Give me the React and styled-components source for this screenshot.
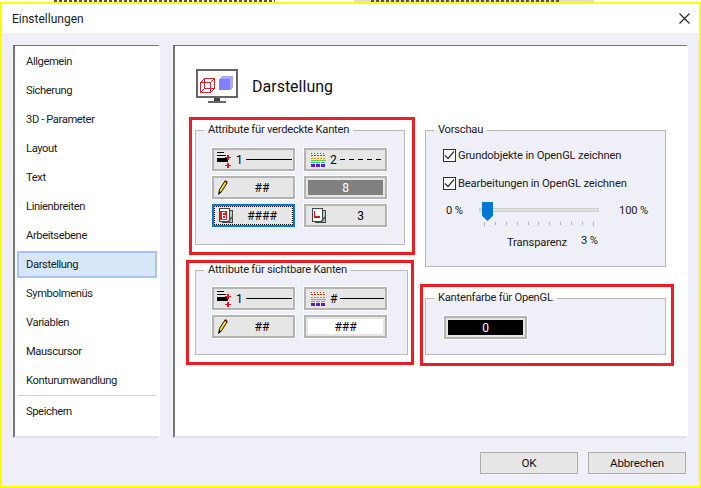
import React from 'react'
import styled, { createGlobalStyle } from 'styled-components'

const GlobalStyle = createGlobalStyle`
  html, body {
    margin: 0;
    padding: 0;
    background: #fff;
  }
  * {
    box-sizing: border-box;
  }
`

const Page = styled.div`
  position: relative;
  width: 701px;
  height: 488px;
  overflow: hidden;
  display: flex;
  flex-direction: column;
  padding: 4px 2px 2px 2px;
  background: #ffff00;
  font-family: Roboto, 'Noto Sans', sans-serif;
  font-size: 11.2px;
  letter-spacing: -0.15px;
  color: #1c1c1c;
`

// clipped window behind the dialog, only its last pixels show
const TopStrip = styled.div`
  position: absolute;
  top: 0;
  left: 0;
  right: 0;
  height: 2px;
  background: linear-gradient(90deg, #fff 354px, #dcdcdc 354px, #dcdcdc 594px, #fff 594px);
  &::before,
  &::after {
    content: '';
    position: absolute;
    top: 0;
    height: 2px;
    background: repeating-linear-gradient(90deg, #555 0 3px, transparent 3px 5px);
  }
  &::before {
    left: 54px;
    width: 221px;
  }
  &::after {
    left: 371px;
    width: 189px;
  }
`

const TitleBar = styled.div`
  height: 29px;
  flex: none;
  background: #fff;
  display: flex;
  align-items: center;
  justify-content: space-between;
  padding: 0 9px 0 10px;
  font-size: 12px;
  letter-spacing: 0;
`

const Body = styled.div`
  flex: 1;
  background: #eeeff7;
  display: flex;
  flex-direction: column;
  padding: 12px 11px 0 11px;
`

const Panes = styled.div`
  display: flex;
  gap: 13px;
  height: 393px;
`

const Sunken = styled.div`
  background: #fff;
  border-style: solid;
  border-width: 1px 2px 2px 2px;
  border-color: #777 #fff #e3e3e3 #777;
`

const NavList = styled(Sunken)`
  flex: none;
  width: 147px;
  padding: 1px 1px 0 2px;
  display: flex;
  flex-direction: column;
  letter-spacing: -0.4px;
`

const NavItem = styled.div`
  height: 29px;
  flex: none;
  display: flex;
  align-items: center;
  padding-left: 9px;
  ${(p) =>
    p.$active &&
    `
    height: 27px;
    margin: 1px 0;
    background: #d6e6f7;
    border: 2px solid #a9c4ea;
    padding-left: 7px;
  `}
`

const NavDivider = styled.div`
  height: 1px;
  flex: none;
  margin: 0 1px 1px;
  background: #d0d0d0;
`

const MainPane = styled(Sunken)`
  flex: 1;
  min-width: 0;
  padding: 19px 13px 0 11px;
`

const Header = styled.div`
  display: flex;
  align-items: center;
  gap: 14px;
  height: 42px;
  margin-left: 10px;
  font-size: 16px;
  letter-spacing: 0;
  color: #111;
`

const Columns = styled.div`
  display: flex;
  margin-top: 10px;
`

const Col = styled.div`
  display: flex;
  flex-direction: column;
`

const RedFrame = styled.div`
  flex: none;
  border: 3px solid #ee1c25;
  padding: ${(p) => p.$pad};
  margin: ${(p) => p.$margin || 0};
  width: ${(p) => p.$w}px;
  height: ${(p) => p.$h}px;
`

const Group = styled.div`
  flex: none;
  margin: ${(p) => p.$margin || 0};
  border: 1px solid #b9b9b9;
  background: #eeeff7;
  width: ${(p) => p.$w}px;
  height: ${(p) => p.$h}px;
  position: relative;
`

const GroupTitle = styled.div`
  position: absolute;
  top: -8px;
  left: 8px;
  padding: 0 4px;
  line-height: 14px;
  letter-spacing: -0.25px;
  background: linear-gradient(#fff 50%, #eeeff7 50%);
`

const ButtonGrid = styled.div`
  display: grid;
  grid-template-columns: 83px 83px;
  grid-auto-rows: 23px;
  column-gap: 9px;
  row-gap: 5px;
  padding: ${(p) => p.$top}px 0 0 ${(p) => p.$left || 16}px;
`

const AttrButton = styled.div`
  display: flex;
  align-items: center;
  background: #e6e6e6;
  border: 2px solid #b4b4b4;
  outline: 1px solid #fff;
  font-size: 12px;
  letter-spacing: 0;
  color: #000;
  position: relative;
  ${(p) =>
    p.$focused &&
    `
    border-color: #0078d7;
    outline: none;
    &::after {
      content: '';
      position: absolute;
      inset: 0;
      border: 1px dotted #000;
    }
  `}
`

const IconSlot = styled.span`
  display: flex;
  width: 22px;
  flex: none;
  padding-left: ${(p) => p.$pl}px;
`

const Hash = styled.span`
  flex: 1;
  text-align: center;
  padding: 0 ${(p) => p.$pr || 0}px 0 ${(p) => p.$pl || 0}px;
`

const StylePreview = styled.span`
  display: flex;
  align-items: center;
  flex: 1;
  gap: 3px;
  padding-left: ${(p) => p.$pl || 0}px;
  padding-right: 1px;
`

const StyleLine = styled.span`
  flex: 1;
  height: 1px;
  background: ${(p) =>
    p.$dashed
      ? 'repeating-linear-gradient(90deg, #000 0 5px, transparent 5px 9px)'
      : '#000'};
`

const Swatch = styled.span`
  flex: 1;
  margin: 2px;
  height: 15px;
  display: flex;
  align-items: center;
  justify-content: center;
  background: ${(p) => p.$bg};
  color: ${(p) => p.$fg};
`

const CheckList = styled.div`
  display: flex;
  flex-direction: column;
  gap: 14px;
  padding: 17px 0 12px 17px;
`

const CheckRow = styled.label`
  display: flex;
  align-items: center;
  gap: 2px;
  height: 14px;
`

const CheckBox = styled.span`
  width: 13px;
  height: 13px;
  border: 1px solid #333;
  background: #fff;
  display: flex;
  align-items: center;
  justify-content: center;
`

const SliderRow = styled.div`
  display: grid;
  grid-template-columns: 33px 120px auto;
  align-items: center;
  height: 16px;
  padding-left: 20px;
`

const SliderTrack = styled.div`
  position: relative;
  height: 4px;
  background: #e0e0e0;
  border: 1px solid #d0d0d0;
`

const Thumb = styled.span`
  position: absolute;
  left: 2px;
  top: -7px;
  width: 11px;
  height: 19px;
  background: #0078d7;
  clip-path: polygon(0 0, 100% 0, 100% 72%, 50% 100%, 0 72%);
`

const MaxLabel = styled.span`
  padding-left: 20px;
`

const Ticks = styled.div`
  display: flex;
  justify-content: space-between;
  width: 110px;
  height: 4px;
  margin: 4px 0 0 58px;
`

const Tick = styled.span`
  width: 1px;
  height: ${(p) => (p.$long ? 4 : 3)}px;
  background: #b0b0b0;
`

const SliderCaption = styled.div`
  display: flex;
  gap: 14px;
  padding: 10px 0 0 81px;
`

const CaptionValue = styled.span`
  margin-top: -2px;
`

const Footer = styled.div`
  display: flex;
  justify-content: flex-end;
  gap: 10px;
  margin-top: 14px;
  padding-right: 2px;
`

const DialogButton = styled.div`
  width: 98px;
  height: 22px;
  display: flex;
  align-items: center;
  justify-content: center;
  background: #e6e6e6;
  border: 1px solid #adadad;
  font-size: 11.6px;
  letter-spacing: -0.2px;
  color: #111;
`

const CloseIcon = () => (
  <svg width='11' height='11' viewBox='0 0 11 11'>
    <path d='M.5 .5l10 10M10.5 .5l-10 10' stroke='#222' strokeWidth='1.1' fill='none' />
  </svg>
)

const MonitorIcon = () => (
  <svg width='42' height='34' viewBox='0 0 42 34' shapeRendering='crispEdges'>
    <rect x='1' y='1' width='40' height='27' fill='#fff' stroke='#666' strokeWidth='2' />
    <rect x='18' y='29' width='6' height='3' fill='#444' />
    <rect x='12' y='32' width='18' height='2' fill='#666' />
    <g fill='none' stroke='#cf2a2a' strokeWidth='1'>
      <rect x='4.5' y='13.5' width='10' height='10' />
      <rect x='8.5' y='9.5' width='10' height='10' />
      <path d='M4.5 13.5l4-4M14.5 13.5l4-4M4.5 23.5l4-4M14.5 23.5l4-4' shapeRendering='auto' />
    </g>
    <path d='M23 10h11v11H23z' fill='#8080ff' />
    <path d='M23 10l3-3h11v11l-3 3V10z' fill='#a8a8ff' />
  </svg>
)

const LineStyleIcon = () => (
  <svg width='14' height='16' viewBox='0 0 14 16' shapeRendering='crispEdges'>
    <rect x='0' y='0' width='7' height='1' fill='#000' />
    <rect x='0' y='3' width='9' height='1' fill='#000' />
    <rect x='0' y='6' width='11' height='4' fill='#000' />
    <path d='M10 3h2v2h2v1h-2v2h-2V6H8V5h2zM10 11h2v2h2v1h-2v2h-2v-2H8v-1h2z' fill='#e8141c' />
  </svg>
)

const rainbow = ['#b8400c', '#e88a00', '#7cc43a', '#19c4d8', '#5a1fc8']

const RainbowIcon = () => (
  <svg width='15' height='14' viewBox='0 0 15 14' shapeRendering='crispEdges'>
    <path d='M0 .5h15' stroke={rainbow[0]} strokeDasharray='1 2' />
    <path d='M0 2.5h15' stroke={rainbow[0]} strokeDasharray='2 1' />
    <path d='M0 5.5h15' stroke={rainbow[1]} strokeDasharray='2 1' />
    <path d='M0 7.5h15' stroke={rainbow[2]} />
    <path d='M0 9.5h15' stroke={rainbow[3]} strokeDasharray='4 1' />
    <path d='M0 12.5h15' stroke={rainbow[4]} strokeWidth='3' strokeDasharray='4 1' />
  </svg>
)

const PencilIcon = () => (
  <svg width='10' height='15' viewBox='0 0 10 15'>
    <path d='M.6 14.4l1-5L6.8 1.2l2.4 1.6L4 11z' fill='#f5d820' stroke='#000' strokeWidth='.9' />
    <path d='M6.6 1.4L7.6.6l1.6 1-.4 1.2z' fill='#d81e2c' stroke='#000' strokeWidth='.5' />
    <path d='M.6 14.4l.6-3.2 2.4 1.4z' fill='#000' />
  </svg>
)

const SheetIcon = ({ mark }) => (
  <svg width='14' height='15' viewBox='0 0 14 15' shapeRendering='crispEdges'>
    <rect x='3' y='2' width='10.5' height='12.5' fill='#a9d0cc' stroke='#444' />
    <rect x='.5' y='.5' width='10' height='13' fill='#fff' stroke='#444' />
    <path d='M13 9l-4 5' stroke='#555' strokeWidth='1.5' shapeRendering='auto' />
    {mark === 'six' ? (
      <>
        <rect x='1' y='3' width='7' height='9' fill='#f01818' />
        <path d='M6 4.5H3v5.5h3V7.5H3.5' fill='none' stroke='#fff' />
      </>
    ) : (
      <path d='M2.5 3v6h5' fill='none' stroke='#e01010' strokeWidth='1.4' />
    )}
  </svg>
)

const CheckMark = () => (
  <svg width='11' height='11' viewBox='0 0 11 11'>
    <path d='M1 5.5l3 3 6-7' stroke='#333' strokeWidth='1.2' fill='none' />
  </svg>
)

const navItems = [
  'Allgemein',
  'Sicherung',
  '3D - Parameter',
  'Layout',
  'Text',
  'Linienbreiten',
  'Arbeitsebene',
  'Darstellung',
  'Symbolmenüs',
  'Variablen',
  'Mauscursor',
  'Konturumwandlung',
]

export default function App() {
  return (
    <>
      <GlobalStyle />
      <Page>
        <TopStrip />
        <TitleBar>
          <span>Einstellungen</span>
          <CloseIcon />
        </TitleBar>
        <Body>
          <Panes>
            <NavList>
              {navItems.map((item) => (
                <NavItem key={item} $active={item === 'Darstellung'}>
                  {item}
                </NavItem>
              ))}
              <NavDivider />
              <NavItem>Speichern</NavItem>
            </NavList>
            <MainPane>
              <Header>
                <MonitorIcon />
                Darstellung
              </Header>
              <Columns>
                <Col>
                  <RedFrame $w={226} $h={138} $pad='10px 0 0 3px' $margin='0 0 5px 3px'>
                    <Group $w={210} $h={115}>
                      <GroupTitle>Attribute für verdeckte Kanten</GroupTitle>
                      <ButtonGrid $top={17}>
                        <AttrButton>
                          <IconSlot $pl={3}><LineStyleIcon /></IconSlot>
                          <StylePreview>1<StyleLine /></StylePreview>
                        </AttrButton>
                        <AttrButton>
                          <IconSlot $pl={5}><RainbowIcon /></IconSlot>
                          <StylePreview $pl={2}>2<StyleLine $dashed /></StylePreview>
                        </AttrButton>
                        <AttrButton>
                          <IconSlot $pl={4}><PencilIcon /></IconSlot>
                          <Hash $pr={5}>##</Hash>
                        </AttrButton>
                        <AttrButton>
                          <Swatch $bg='#808080' $fg='#fff'>8</Swatch>
                        </AttrButton>
                        <AttrButton $focused>
                          <IconSlot $pl={5}><SheetIcon mark='six' /></IconSlot>
                          <Hash $pr={5}>####</Hash>
                        </AttrButton>
                        <AttrButton>
                          <IconSlot $pl={6}><SheetIcon mark='ell' /></IconSlot>
                          <Hash $pl={8}>3</Hash>
                        </AttrButton>
                      </ButtonGrid>
                    </Group>
                  </RedFrame>
                  <RedFrame $w={228} $h={105} $pad='7px 0 0 6px'>
                    <Group $w={213} $h={85}>
                      <GroupTitle>Attribute für sichtbare Kanten</GroupTitle>
                      <ButtonGrid $top={16}>
                        <AttrButton>
                          <IconSlot $pl={3}><LineStyleIcon /></IconSlot>
                          <StylePreview>1<StyleLine /></StylePreview>
                        </AttrButton>
                        <AttrButton>
                          <IconSlot $pl={5}><RainbowIcon /></IconSlot>
                          <StylePreview $pl={2}>#<StyleLine /></StylePreview>
                        </AttrButton>
                        <AttrButton>
                          <IconSlot $pl={4}><PencilIcon /></IconSlot>
                          <Hash $pr={5}>##</Hash>
                        </AttrButton>
                        <AttrButton>
                          <Swatch $bg='#fff' $fg='#000'>###</Swatch>
                        </AttrButton>
                      </ButtonGrid>
                    </Group>
                  </RedFrame>
                </Col>
                <Col>
                  <Group $w={241} $h={137} $margin='13px 0 0 10px'>
                    <GroupTitle>Vorschau</GroupTitle>
                    <CheckList>
                      <CheckRow><CheckBox><CheckMark /></CheckBox>Grundobjekte in OpenGL zeichnen</CheckRow>
                      <CheckRow><CheckBox><CheckMark /></CheckBox>Bearbeitungen in OpenGL zeichnen</CheckRow>
                    </CheckList>
                    <SliderRow>
                      <span>0 %</span>
                      <SliderTrack><Thumb /></SliderTrack>
                      <MaxLabel>100 %</MaxLabel>
                    </SliderRow>
                    <Ticks>
                      {Array.from({ length: 11 }).map((_, i) => (
                        <Tick key={i} $long={i === 0 || i === 10} />
                      ))}
                    </Ticks>
                    <SliderCaption>
                      <span>Transparenz</span>
                      <CaptionValue>3 %</CaptionValue>
                    </SliderCaption>
                  </Group>
                  <RedFrame $w={254} $h={82} $pad='11px 0 0 2px' $margin='17px 0 0 5px'>
                    <Group $w={241} $h={57}>
                      <GroupTitle>Kantenfarbe für OpenGL</GroupTitle>
                      <ButtonGrid $top={17} $left={18}>
                        <AttrButton>
                          <Swatch $bg='#000' $fg='#fff'>0</Swatch>
                        </AttrButton>
                      </ButtonGrid>
                    </Group>
                  </RedFrame>
                </Col>
              </Columns>
            </MainPane>
          </Panes>
          <Footer>
            <DialogButton>OK</DialogButton>
            <DialogButton>Abbrechen</DialogButton>
          </Footer>
        </Body>
      </Page>
    </>
  )
}
